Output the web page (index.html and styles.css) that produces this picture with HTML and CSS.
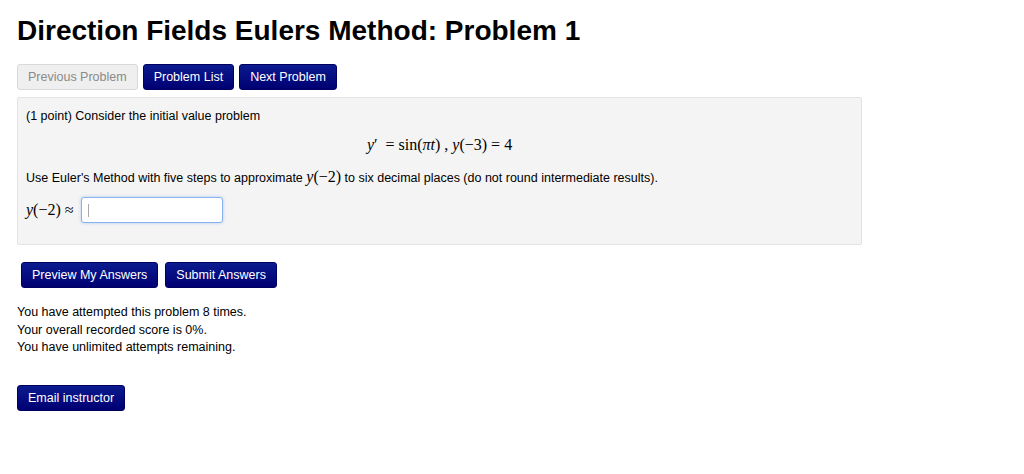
FILE: index.html
```html
<!DOCTYPE html>
<html>
<head>
<meta charset="utf-8">
<link rel="stylesheet" href="styles.css">
</head>
<body>
<div class="page">
  <h1 class="title">Direction Fields Eulers Method: Problem 1</h1>
  <div class="nav">
    <span class="btn btn-disabled">Previous Problem</span>
    <span class="btn">Problem List</span>
    <span class="btn">Next Problem</span>
  </div>
  <div class="problem">
    <p class="line">(1 point) Consider the initial value problem</p>
    <div class="display"><span class="math"><i>y</i>&#8242; &nbsp;= sin(<i>&pi;t</i>) , <i>y</i>(&minus;3) = 4</span></div>
    <p class="line">Use Euler's Method with five steps to approximate <span class="math"><i>y</i>(&minus;2)</span> to six decimal places (do not round intermediate results).</p>
    <div class="answer">
      <span class="math"><i>y</i>(&minus;2) &asymp;</span>
      <span class="input"><span class="caret"></span></span>
    </div>
  </div>
  <div class="submit">
    <span class="btn btn-lg">Preview My Answers</span>
    <span class="btn btn-lg">Submit Answers</span>
  </div>
  <div class="status">
    <p>You have attempted this problem 8 times.</p>
    <p>Your overall recorded score is 0%.</p>
    <p>You have unlimited attempts remaining.</p>
  </div>
  <div class="email">
    <span class="btn btn-lg">Email instructor</span>
  </div>
</div>
</body>
</html>
```

FILE: styles.css
```css
html, body {
  margin: 0;
  padding: 0;
  background: #ffffff;
}
body {
  font-family: "Liberation Sans", Arial, sans-serif;
  font-size: 12.5px;
  color: #000;
}
.page {
  padding: 14px 17px 0 17px;
}
.title {
  margin: 0;
  font-size: 28px;
  font-weight: bold;
  line-height: 33px;
  height: 33px;
}
.nav {
  display: flex;
  gap: 5px;
  margin-top: 17px;
}
.btn {
  display: inline-flex;
  align-items: center;
  justify-content: center;
  height: 24px;
  padding: 0 10px;
  border: 1px solid #000060;
  border-radius: 3px;
  background: linear-gradient(#0b1b8e, #000072);
  color: #fff;
  font-size: 12.5px;
  white-space: nowrap;
}
.btn-disabled {
  background: #efefef;
  border-color: #d9d9d9;
  color: #8a8a8a;
}
.problem {
  margin-top: 7px;
  width: 845px;
  height: 148px;
  box-sizing: border-box;
  border: 1px solid #e3e3e3;
  border-radius: 2px;
  background: #f4f4f4;
  padding: 10px 8px 0 8px;
}
.line {
  margin: 0;
  line-height: 16px;
}
.display {
  text-align: center;
  margin: 11px 0 13px 0;
  line-height: 20px;
}
.math {
  font-family: "Liberation Serif", "Times New Roman", serif;
  font-size: 16px;
}
.answer {
  display: flex;
  align-items: center;
  gap: 7px;
  margin-top: 11px;
}
.input {
  display: flex;
  align-items: center;
  width: 142px;
  height: 26px;
  box-sizing: border-box;
  border: 1px solid #8ab4f0;
  border-radius: 3px;
  background: #fff;
  box-shadow: 0 0 3px rgba(100, 150, 240, 0.5);
  padding-left: 6px;
}
.caret {
  width: 1px;
  height: 13px;
  background: #aaa;
}
.submit {
  display: flex;
  gap: 7px;
  margin-top: 17px;
  padding-left: 4px;
}
.btn-lg {
  height: 24px;
}
.status {
  margin-top: 16px;
}
.status p {
  margin: 0;
  line-height: 17.5px;
}
.email {
  display: flex;
  margin-top: 28px;
}
```
